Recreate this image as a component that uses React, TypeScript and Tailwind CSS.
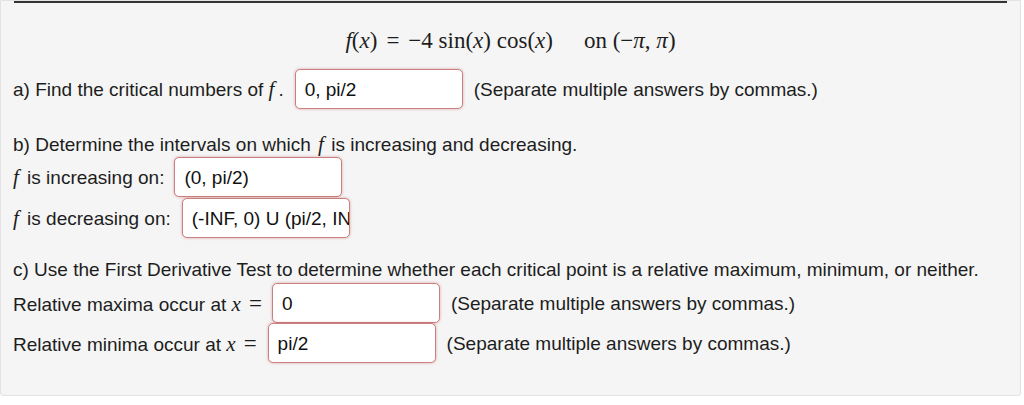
import React from "react";

const sans = { fontFamily: '"Liberation Sans", Arial, sans-serif' };
const serif = { fontFamily: '"Liberation Serif", "Times New Roman", serif' };

function M({ children, className = "" }: { children: React.ReactNode; className?: string }) {
  return (
    <span className={`italic text-[21px] ${className}`} style={serif}>
      {children}
    </span>
  );
}

function Eq() {
  return (
    <span className="text-[23px] ml-[8px]" style={serif}>
      =
    </span>
  );
}

function Box({ value }: { value: string }) {
  return (
    <div className="w-[168px] h-[40px] bg-white border border-[#c9807f] rounded-[5px] shadow-[0_0_3px_rgba(190,70,70,0.45)] flex items-center px-[9px] overflow-hidden whitespace-nowrap text-[#111]">
      <span className="whitespace-nowrap">{value}</span>
    </div>
  );
}

export default function App() {
  return (
    <div className="w-[1024px] h-[405px] bg-white overflow-hidden" style={sans}>
      <div className="w-[1021px] h-[396px] bg-[#f5f5f5] border border-[#e2e2e2] rounded-b-[3px] text-[19px] text-[#1d1d1d] leading-none">
        <div className="mx-[13px] h-[2px] bg-[#333]" />
        <div className="h-[63px] flex items-center justify-center pt-[11px]" style={serif}>
          <span className="text-[23px] whitespace-nowrap">
            <span className="italic">f</span>(<span className="italic">x</span>)<span className="mx-[9px]">=</span>−4 sin(<span className="italic">x</span>) cos(<span className="italic">x</span>)
            <span className="inline-block w-[31px]" />
            on (−<span className="italic">π</span>, <span className="italic">π</span>)
          </span>
        </div>

        <div className="flex items-center pl-[12px] mt-[3px]">
          <span>
            a) Find the critical numbers of <M className="mr-[4px]">f</M>.
          </span>
          <div className="ml-[11px]">
            <Box value="0, pi/2" />
          </div>
          <span className="ml-[11px]">(Separate multiple answers by commas.)</span>
        </div>

        <div className="pl-[12px] mt-[25px]">
          b) Determine the intervals on which <M className="mx-[2px]">f</M> is increasing and decreasing.
        </div>
        <div className="flex items-center pl-[12px] mt-[2px]">
          <span>
            <M className="mr-[3px]">f</M> is increasing on:
          </span>
          <div className="ml-[10px]">
            <Box value="(0, pi/2)" />
          </div>
        </div>
        <div className="flex items-center pl-[12px] mt-[1px]">
          <span>
            <M className="mr-[3px]">f</M> is decreasing on:
          </span>
          <div className="ml-[11px]">
            <Box value="(-INF, 0) U (pi/2, INF)" />
          </div>
        </div>

        <div className="pl-[12px] mt-[22px]">
          c) Use the First Derivative Test to determine whether each critical point is a relative maximum, minimum, or neither.
        </div>
        <div className="flex items-center pl-[12px] mt-[4px]">
          <span>
            Relative maxima occur at <M>x</M>
            <Eq />
          </span>
          <div className="ml-[10px]">
            <Box value="0" />
          </div>
          <span className="ml-[11px]">(Separate multiple answers by commas.)</span>
        </div>
        <div className="flex items-center pl-[12px] mt-0">
          <span>
            Relative minima occur at <M>x</M>
            <Eq />
          </span>
          <div className="ml-[11px]">
            <Box value="pi/2" />
          </div>
          <span className="ml-[11px]">(Separate multiple answers by commas.)</span>
        </div>
      </div>
    </div>
  );
}
